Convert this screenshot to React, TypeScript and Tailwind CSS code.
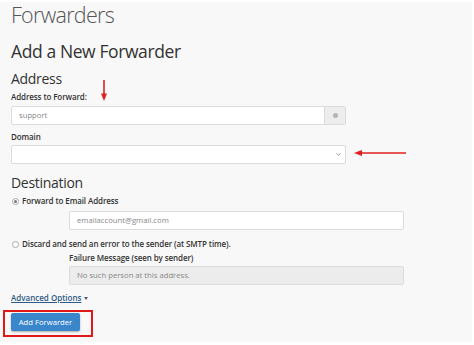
import { ChevronDown } from "lucide-react";

const label = "block text-[8px] font-semibold leading-[12px] tracking-[-0.1px] text-[#333]";
const field = "w-[335px] h-[19px] border border-[#dcdcdc] rounded-[2px] text-[7.7px] text-[#888] pl-[7px] leading-[17px]";

export default function App() {
  return (
    <div className="w-[474px] h-[345px] bg-white overflow-hidden pt-[2px]" style={{ fontFamily: '"Open Sans", sans-serif' }}>
      <div className="w-[472px] h-[340px] bg-[#f8f8f8] px-[11px] text-[#333]">
        <h1 className="text-[21.5px] font-light leading-[26px] tracking-[-0.7px] text-[#555]">Forwarders</h1>
        <h2 className="text-[17.5px] leading-[22px] tracking-[-0.4px] mt-[12px]">Add a New Forwarder</h2>

        <h3 className="text-[14px] leading-[18px] tracking-[-0.3px] mt-[8px]">Address</h3>
        <div className="relative mt-[3px]">
          <label className={label}>Address to Forward:</label>
          <svg className="absolute left-[89px] top-[-11px]" width="8" height="22" viewBox="0 0 8 22">
            <line x1="4" y1="0" x2="4" y2="15" stroke="#e02020" strokeWidth="1.6" />
            <path d="M1 13.5 L4 21 L7 13.5 Z" fill="#e02020" />
          </svg>
        </div>
        <div className="flex w-[335px] h-[19px] mt-[3px] border border-[#dcdcdc] rounded-[2px] bg-white">
          <div className="flex-1 text-[7.7px] text-[#888] pl-[7px] leading-[17px]">support</div>
          <div className="w-[21px] border-l border-[#dcdcdc] bg-[#ededed] flex items-center justify-center">
            <div className="w-[5px] h-[5px] rounded-full bg-[#b5b5b5]" />
          </div>
        </div>

        <label className={`${label} mt-[6px]`}>Domain</label>
        <div className="flex items-center mt-[2px]">
          <div className="flex items-center justify-end w-[335px] h-[19px] border border-[#dcdcdc] rounded-[2px] bg-white pr-[3px]">
            <ChevronDown size={7} strokeWidth={2.5} color="#777" />
          </div>
          <svg className="ml-[8px] mt-[-3px]" width="52" height="8" viewBox="0 0 52 8">
            <line x1="6" y1="4" x2="52" y2="4" stroke="#e02020" strokeWidth="1.6" />
            <path d="M0 4 L8 1 L8 7 Z" fill="#e02020" />
          </svg>
        </div>

        <h3 className="text-[14px] leading-[18px] tracking-[-0.3px] mt-[10px]">Destination</h3>
        <div className="flex items-center gap-[3px] mt-[3px] pl-[1px]">
          <span className="w-[7px] h-[7px] rounded-full border border-[#aaa] bg-white flex items-center justify-center">
            <span className="w-[3px] h-[3px] rounded-full bg-[#777]" />
          </span>
          <span className={label}>Forward to Email Address</span>
        </div>
        <div className={`${field} ml-[58px] mt-[4px] bg-white`}>emailaccount@gmail.com</div>

        <div className="flex items-center gap-[3px] mt-[8px] pl-[1px]">
          <span className="w-[7px] h-[7px] rounded-full border border-[#aaa] bg-white" />
          <span className={label}>Discard and send an error to the sender (at SMTP time).</span>
        </div>
        <label className={`${label} ml-[58px] mt-[2px]`}>Failure Message (seen by sender)</label>
        <div className={`${field} ml-[58px] mt-[2px] bg-[#ececec]`}>No such person at this address.</div>

        <div className="flex items-center gap-[3px] mt-[7px]">
          <span className="text-[8px] font-semibold leading-[12px] text-[#2c5a84] underline">Advanced Options</span>
          <span className="w-0 h-0 border-l-[2.5px] border-r-[2.5px] border-t-[3px] border-l-transparent border-r-transparent border-t-[#556]" />
        </div>

        <div className="mt-[6px] ml-[-8px] w-[90px] h-[27px] border-2 border-[#e01818] pl-[6px] pt-[1px]">
          <button className="block w-[69px] h-[18px] bg-[#3a86cb] rounded-[2px] text-white text-[7.7px] leading-[18px] shadow-[0_1px_2px_rgba(0,0,0,0.3)]">
            Add Forwarder
          </button>
        </div>
      </div>
    </div>
  );
}
